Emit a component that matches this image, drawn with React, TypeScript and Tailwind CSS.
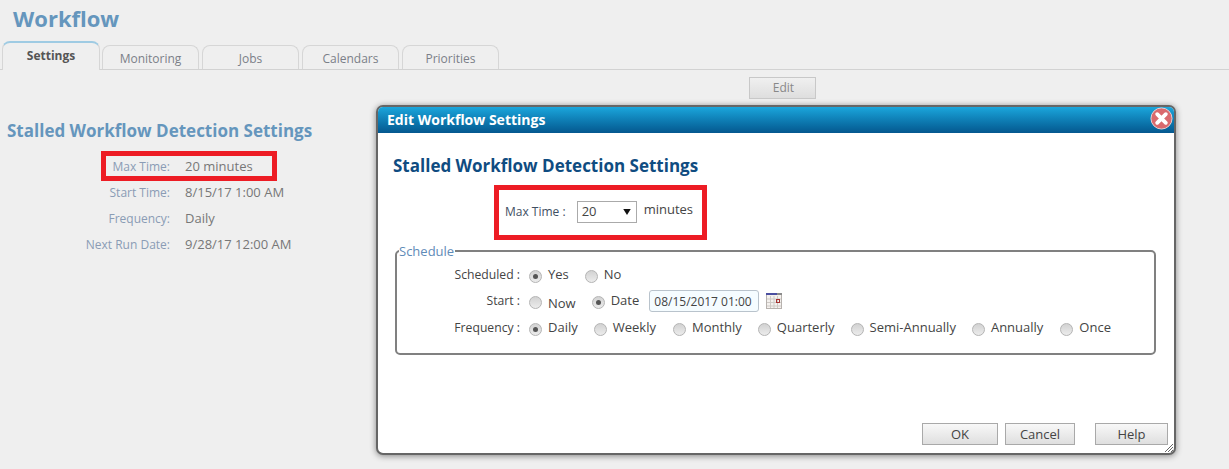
const Radio = ({ label, checked = false, className = '', labelClass = '' }: { label: string; checked?: boolean; className?: string; labelClass?: string }) => (
  <div className={`flex items-center ${className}`}>
    <span className="mt-[2px] flex h-[13px] w-[13px] shrink-0 items-center justify-center rounded-full border border-[#b4b4b4] bg-gradient-to-b from-[#d2d2d2] to-[#ececec]">
      {checked && <span className="h-[5px] w-[5px] rounded-full bg-[#555555]" />}
    </span>
    <span className={`ml-[6px] ${labelClass}`}>{label}</span>
  </div>
);

const tabs = ['Monitoring', 'Jobs', 'Calendars', 'Priorities'];

const details = [
  ['Start Time:', '8/15/17 1:00 AM'],
  ['Frequency:', 'Daily'],
  ['Next Run Date:', '9/28/17 12:00 AM'],
];

const frequencies = [
  { label: 'Weekly', cls: 'ml-[16px]' },
  { label: 'Monthly', cls: 'ml-[17px]' },
  { label: 'Quarterly', cls: 'ml-[16px]' },
  { label: 'Semi-Annually', cls: 'ml-[16px]' },
  { label: 'Annually', cls: 'ml-[16px]' },
  { label: 'Once', cls: 'ml-[17px]' },
];

const App = () => {
  return (
    <div className="relative h-[469px] w-[1229px] overflow-hidden bg-[#efefef] font-['Open_Sans',sans-serif] text-[13px] text-[#444444]">
      {/* Page header */}
      <h1 className="pl-[13px] pt-[2px] text-[22px] font-bold leading-[32px] text-[#6596bd]">Workflow</h1>

      {/* Tabs */}
      <div className="mt-[7px] flex h-[29px] items-end gap-[3px] border-b border-[#d2d2d2] pl-[2px]">
        <div className="-mb-px -mr-px flex h-[29px] w-[98px] items-center justify-center rounded-t-[8px] border-x border-[#d6d6d6] border-t-2 border-t-[#9fcbe3] bg-[#efefef] pb-[2px] text-[12px] font-bold text-[#555555]">
          Settings
        </div>
        {tabs.map((t) => (
          <div key={t} className="flex h-[24px] w-[97px] items-center justify-center rounded-t-[8px] border-x border-t border-[#d6d6d6] pt-[2px] text-[12px] text-[#7b7f88]">
            {t}
          </div>
        ))}
      </div>

      {/* Edit */}
      <div className="mt-[7px] flex pl-[749px]">
        <button className="h-[22px] w-[67px] border border-[#c8c8c8] bg-gradient-to-b from-[#f0f0f0] to-[#dedede] pl-[2px] text-[12px] text-[#888888]">Edit</button>
      </div>

      {/* Read-only settings */}
      <h2 className="mt-[19px] pl-[7px] text-[17px] font-bold leading-[26px] text-[#6596bd]">Stalled Workflow Detection Settings</h2>
      <div className="ml-[101px] mt-[7px] flex h-[30px] w-[176px] items-center border-[5px] border-[#ed1c24] pt-[2px]">
        <span className="w-[64px] text-right text-[12px] text-[#8a9cb5]">Max Time:</span>
        <span className="ml-[15px] text-[13px] text-[#777777]">20 minutes</span>
      </div>
      <div className="-mt-px flex flex-col">
        {details.map(([k, v]) => (
          <div key={k} className="flex h-[26px] items-center">
            <span className="w-[170px] text-right text-[12px] text-[#8a9cb5]">{k}</span>
            <span className="ml-[15px] text-[13px] text-[#777777]">{v}</span>
          </div>
        ))}
      </div>

      {/* Dialog */}
      <div className="absolute left-[376px] top-[105px] flex h-[350px] w-[800px] flex-col overflow-hidden rounded-[7px] border-2 border-[#666666] bg-white shadow-[0_1px_6px_rgba(0,0,0,0.45)]">
        <div className="relative flex h-[26px] shrink-0 items-center bg-gradient-to-b from-[#1ba6dc] to-[#05588f] pb-[2px] pl-[9px] text-[14px] font-bold text-white">
          Edit Workflow Settings
          <svg viewBox="0 0 24 24" className="absolute right-[1px] top-0 h-[23px] w-[23px]">
            <circle cx="12" cy="12" r="11" fill="#d96a6e" stroke="#e9d3d3" strokeWidth="1" />
            <path d="M7.5 7.5 L16.5 16.5 M16.5 7.5 L7.5 16.5" stroke="#ffffff" strokeWidth="4" strokeLinecap="round" />
          </svg>
        </div>

        <div className="relative flex-1 pl-[15px] text-[#444444]">
          <h2 className="mt-[20px] text-[17px] font-bold leading-[26px] text-[#0f4c81]">Stalled Workflow Detection Settings</h2>

          <div className="ml-[101px] mt-[6px] flex h-[55px] w-[213px] items-center border-[5px] border-[#ed1c24] pb-[2px] pl-[6px]">
            <span className="text-[12px] text-[#3f4f63]">Max Time :</span>
            <div className="ml-[11px] flex h-[22px] w-[60px] items-center justify-between border border-[#aaaaaa] bg-white pl-[4px] pr-[5px] text-[13px]">
              20
              <svg viewBox="0 0 10 8" className="h-[6px] w-[8px]"><path d="M0 0 H10 L5 8 Z" fill="#111111" /></svg>
            </div>
            <span className="-mt-[3px] ml-[7px] text-[13px]">minutes</span>
          </div>

          {/* Schedule group */}
          <div className="relative ml-[2px] mt-[10px] h-[105px] w-[761px] rounded-[5px] border-2 border-[#808080] pt-[10px] text-[13px]">
            <span className="absolute -top-[10px] left-[2px] bg-white pr-[1px] text-[13px] leading-[18px] text-[#5f8bb8]">Schedule</span>

            <div className="flex h-[26px] items-center">
              <span className="w-[123px] text-right text-[12.2px]">Scheduled :</span>
              <Radio label="Yes" checked className="ml-[9px]" />
              <Radio label="No" className="ml-[16px]" />
            </div>

            <div className="flex h-[26px] items-center">
              <span className="w-[123px] text-right text-[12.2px]">Start :</span>
              <Radio label="Now" className="ml-[9px]" labelClass="mt-[5px]" />
              <Radio label="Date" checked className="ml-[16px]" labelClass="-mt-px" />
              <input
                readOnly
                value="08/15/2017 01:00"
                className="ml-[10px] h-[22px] w-[110px] rounded-[3px] border border-[#b9c3cc] bg-[#f5fcff] px-[4px] text-[12px] text-[#444444] outline-none"
              />
              <svg viewBox="0 0 16 16" className="ml-[7px] h-[16px] w-[16px]">
                <rect x="0.5" y="0.5" width="15" height="15" fill="#f4f1ee" stroke="#b7b2ae" />
                <rect x="0" y="0" width="11" height="2" fill="#4b4fa0" />
                <rect x="11" y="0" width="5" height="2" fill="#8b8b8b" />
                <path d="M1 6 H15 M1 9.5 H15 M1 13 H15 M4.5 3 V15 M8 3 V15 M11.5 3 V15" stroke="#cfcac6" strokeWidth="1" />
                <rect x="10.5" y="6.5" width="3" height="3" fill="none" stroke="#a83232" />
              </svg>
            </div>

            <div className="mt-[1px] flex h-[26px] items-center">
              <span className="w-[123px] text-right text-[12.2px]">Frequency :</span>
              <Radio label="Daily" checked className="ml-[9px]" />
              {frequencies.map((f) => (
                <Radio key={f.label} label={f.label} className={f.cls} />
              ))}
            </div>
          </div>

          {/* Footer buttons */}
          <div className="absolute bottom-[8px] right-[6px] flex text-[13px]">
            <button className="h-[22px] w-[76px] border border-[#a9a9a9] bg-gradient-to-b from-[#f8f8f8] to-[#dfdfdf] pt-[1px]">OK</button>
            <button className="ml-[7px] h-[22px] w-[70px] border border-[#a9a9a9] bg-gradient-to-b from-[#f8f8f8] to-[#dfdfdf] pt-[1px]">Cancel</button>
            <button className="ml-[20px] h-[22px] w-[73px] border border-[#a9a9a9] bg-gradient-to-b from-[#f8f8f8] to-[#dfdfdf] pt-[1px]">Help</button>
          </div>

          {/* Resize grip */}
          <svg viewBox="0 0 8 8" className="absolute bottom-[1px] right-[1px] h-[8px] w-[8px]">
            <path d="M0 8 L8 0 M3 8 L8 3 M6 8 L8 6" stroke="#666666" strokeWidth="1" />
          </svg>
        </div>
      </div>
    </div>
  );
};

export default App;
